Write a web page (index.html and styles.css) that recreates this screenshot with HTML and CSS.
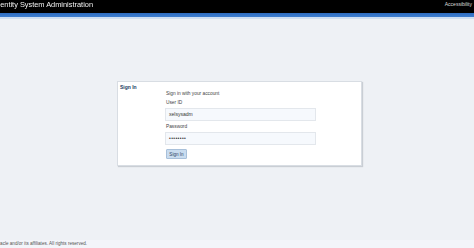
FILE: index.html
```html
<!DOCTYPE html>
<html>
<head>
<meta charset="utf-8">
<link rel="stylesheet" href="styles.css">
</head>
<body>
<div class="page">
  <header class="topbar">
    <div class="brand">Identity System Administration</div>
    <div class="access">Accessibility</div>
  </header>
  <div class="stripe"></div>
  <div class="stripe2"></div>
  <main class="main">
    <section class="card">
      <div class="card-title">Sign In</div>
      <div class="card-body">
        <div class="intro">Sign in with your account</div>
        <label class="lbl">User ID</label>
        <div class="field">xelsysadm</div>
        <label class="lbl">Password</label>
        <div class="field pw">••••••••</div>
        <button class="btn">Sign In</button>
      </div>
    </section>
  </main>
  <footer class="foot">Oracle and/or its affiliates. All rights reserved.</footer>
</div>
</body>
</html>
```

FILE: styles.css
```css
html, body { margin: 0; padding: 0; }
body {
  font-family: "Liberation Sans", Arial, sans-serif;
  background: #eef1f5;
  width: 474px;
  height: 248px;
  overflow: hidden;
}
.page { display: flex; flex-direction: column; height: 248px; }
.topbar {
  background: #000;
  height: 13px;
  display: flex;
  justify-content: space-between;
  align-items: flex-start;
  color: #fff;
  overflow: hidden;
}
.brand {
  font-size: 7.4px;
  line-height: 9px;
  margin-left: -6px;
  white-space: nowrap;
  color: #f2f2f2;
  will-change: transform;
}
.access {
  font-size: 5px;
  line-height: 8px;
  margin-right: 2px;
  color: #ddd;
}
.stripe { height: 4px; background: linear-gradient(#2d6cc0, #3f7fd0); }
.stripe2 { height: 2px; background: #cfe0f3; }
.main {
  flex: 1;
  display: flex;
  padding: 62px 0 0 117px;
}
.card {
  width: 243px;
  height: 83px;
  background: #fff;
  border: 1px solid #d8dde3;
  box-shadow: 1px 1px 1px #c9ced4;
  display: flex;
}
.card-title {
  width: 44px;
  padding: 2px 0 0 2px;
  font-size: 5px;
  font-weight: bold;
  color: #1f3d63;
}
.card-body {
  display: flex;
  flex-direction: column;
  align-items: flex-start;
  padding: 9px 0 0 2px;
  font-size: 4.8px;
  color: #444;
}
.intro { line-height: 6px; }
.lbl { line-height: 6px; margin-top: 3px; }
.field {
  width: 146px;
  height: 11px;
  margin-top: 2px;
  margin-left: -1px;
  border: 1px solid #e3e7ec;
  background: #f6f9fd;
  padding-left: 3px;
  line-height: 11px;
  color: #333;
  font-size: 5px;
}
.pw { font-size: 5px; letter-spacing: 0.4px; }
.btn {
  margin-top: 4px;
  font-family: inherit;
  font-size: 4.6px;
  color: #33475f;
  background: #c9dcef;
  border: 1px solid #a8c0da;
  border-radius: 1px;
  padding: 0;
  height: 10px;
  width: 21px;
  white-space: nowrap;
}
.foot {
  height: 8px;
  background: #f3f5fa;
  font-size: 4.6px;
  line-height: 8px;
  color: #555;
  margin-left: -5px;
  white-space: nowrap;
}
```
